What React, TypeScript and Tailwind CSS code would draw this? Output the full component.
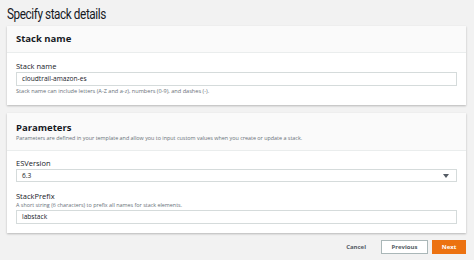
import React from "react";

export default function App() {
  const font = { fontFamily: '"Open Sans", "Noto Sans", sans-serif' };
  return (
    <div className="w-[474px] h-[260px] bg-[#f2f2f2] overflow-hidden text-[#16191f]" style={font}>
      <div className="pl-[7px] pt-[1px] h-[26px]">
        <div
          className="inline-block origin-left scale-x-[0.84] text-[14px] leading-[20px] tracking-[-0.5px] text-[#16191f]"
          style={{ fontFamily: 'Roboto, "Open Sans", sans-serif' }}
        >
          Specify stack details
        </div>
      </div>

      <div className="mx-[7px] w-[459px] bg-white shadow-[0_1px_2px_rgba(0,0,0,0.25)]">
        <div className="h-[27px] bg-[#fafafa] border-b border-[#eaeded] pl-[9px] flex items-center text-[9.5px] font-bold">Stack name</div>
        <div className="px-[9px] pt-[8px] pb-[10px]">
          <div className="text-[7.5px] leading-[10px]">Stack name</div>
          <div className="mt-[1px] h-[14px] border border-[#d5dbdb] flex items-center pl-[5px] text-[6.6px]">cloudtrail-amazon-es</div>
          <div className="mt-[1px] text-[5.6px] leading-[8px] text-[#687078]">Stack name can include letters (A-Z and a-z), numbers (0-9), and dashes (-).</div>
        </div>
      </div>

      <div className="mt-[8px] mx-[7px] w-[459px] bg-white shadow-[0_1px_2px_rgba(0,0,0,0.25)]">
        <div className="h-[38px] bg-[#fafafa] border-b border-[#eaeded] pl-[9px] flex flex-col justify-center">
          <div className="text-[9.5px] font-bold leading-[12px] mt-[1px]">Parameters</div>
          <div className="text-[5.4px] leading-[8px] text-[#687078]">Parameters are defined in your template and allow you to input custom values when you create or update a stack.</div>
        </div>
        <div className="px-[9px] pt-[7px] pb-[9px]">
          <div className="text-[7.5px] leading-[10px]">ESVersion</div>
          <div className="mt-[1px] h-[13px] border border-[#d5dbdb] flex items-center justify-between pl-[5px] pr-[7px] text-[6.6px]">
            <span>6.3</span>
            <svg width="6" height="4" viewBox="0 0 6 4"><path d="M0 0 L6 0 L3 4 Z" fill="#545b64" /></svg>
          </div>
          <div className="mt-[9px] text-[7.5px] leading-[10px]">StackPrefix</div>
          <div className="text-[5.4px] leading-[8px] text-[#687078]">A short string (6 characters) to prefix all names for stack elements.</div>
          <div className="mt-[1px] h-[14px] border border-[#d5dbdb] flex items-center pl-[5px] text-[6.6px]">labstack</div>
        </div>
      </div>

      <div className="mt-[7px] mr-[8px] flex justify-end items-center">
        <span className="text-[6px] font-bold text-[#545b64] mr-[15px]">Cancel</span>
        <div className="w-[47px] h-[14px] bg-white border border-[#aab7b8] flex items-center justify-center text-[6px] font-bold text-[#545b64]">Previous</div>
        <div className="ml-[4px] w-[34px] h-[14px] bg-[#ec7211] flex items-center justify-center text-[6px] font-bold text-white">Next</div>
      </div>
    </div>
  );
}
